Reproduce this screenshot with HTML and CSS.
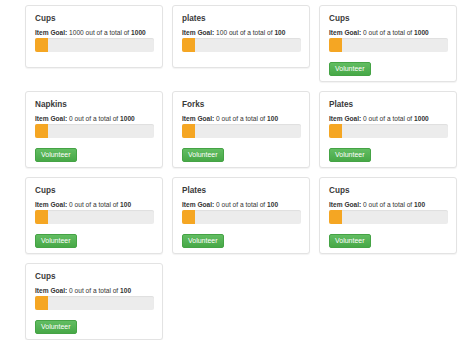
FILE: index.html
```html
<!DOCTYPE html>
<html lang="en">
<head>
    <meta charset="UTF-8">
    <title>Volunteer Items</title>
    <link rel="stylesheet" href="styles.css">
</head>
<body>
    <div class="items">
        <div class="item">
            <h4>Cups</h4>
            <p class="goal"><b>Item Goal:</b> 1000 out of a total of <b>1000</b></p>
            <div class="progress"><div class="progress-bar"></div></div>
        </div>
        <div class="item">
            <h4>plates</h4>
            <p class="goal"><b>Item Goal:</b> 100 out of a total of <b>100</b></p>
            <div class="progress"><div class="progress-bar"></div></div>
        </div>
        <div class="item">
            <h4>Cups</h4>
            <p class="goal"><b>Item Goal:</b> 0 out of a total of <b>1000</b></p>
            <div class="progress"><div class="progress-bar"></div></div>
            <button class="btn-volunteer">Volunteer</button>
        </div>
        <div class="item">
            <h4>Napkins</h4>
            <p class="goal"><b>Item Goal:</b> 0 out of a total of <b>1000</b></p>
            <div class="progress"><div class="progress-bar"></div></div>
            <button class="btn-volunteer">Volunteer</button>
        </div>
        <div class="item">
            <h4>Forks</h4>
            <p class="goal"><b>Item Goal:</b> 0 out of a total of <b>100</b></p>
            <div class="progress"><div class="progress-bar"></div></div>
            <button class="btn-volunteer">Volunteer</button>
        </div>
        <div class="item">
            <h4>Plates</h4>
            <p class="goal"><b>Item Goal:</b> 0 out of a total of <b>1000</b></p>
            <div class="progress"><div class="progress-bar"></div></div>
            <button class="btn-volunteer">Volunteer</button>
        </div>
        <div class="item">
            <h4>Cups</h4>
            <p class="goal"><b>Item Goal:</b> 0 out of a total of <b>100</b></p>
            <div class="progress"><div class="progress-bar"></div></div>
            <button class="btn-volunteer">Volunteer</button>
        </div>
        <div class="item">
            <h4>Plates</h4>
            <p class="goal"><b>Item Goal:</b> 0 out of a total of <b>100</b></p>
            <div class="progress"><div class="progress-bar"></div></div>
            <button class="btn-volunteer">Volunteer</button>
        </div>
        <div class="item">
            <h4>Cups</h4>
            <p class="goal"><b>Item Goal:</b> 0 out of a total of <b>100</b></p>
            <div class="progress"><div class="progress-bar"></div></div>
            <button class="btn-volunteer">Volunteer</button>
        </div>
        <div class="item">
            <h4>Cups</h4>
            <p class="goal"><b>Item Goal:</b> 0 out of a total of <b>100</b></p>
            <div class="progress"><div class="progress-bar"></div></div>
            <button class="btn-volunteer">Volunteer</button>
        </div>
    </div>
</body>
</html>
```
FILE: styles.css
```css
body {
    margin: 0;
    background: #fff;
    font-family: "Liberation Sans", Arial, sans-serif;
    color: #333;
}
.items {
    display: grid;
    grid-template-columns: repeat(3, 138px);
    column-gap: 9px;
    row-gap: 9px;
    align-items: start;
    padding: 5px 0 0 25px;
}
.item {
    box-sizing: border-box;
    border: 1px solid #e3e3e3;
    border-radius: 3px;
    box-shadow: 0 1px 1px rgba(0, 0, 0, 0.05);
    padding: 8px 8px 5px 9px;
    background: #fff;
}
.item h4 {
    margin: 0 0 5px;
    font-size: 8.2px;
    line-height: 10px;
    font-weight: bold;
    color: #3a3a3a;
}
.goal {
    margin: 0 0 1px;
    font-size: 6.6px;
    line-height: 8px;
    color: #333;
}
.progress {
    height: 14px;
    background: #ececec;
    border-radius: 2px;
    box-shadow: inset 0 1px 1px rgba(0, 0, 0, 0.06);
    margin-bottom: 10px;
    overflow: hidden;
}
.progress-bar {
    width: 13px;
    height: 100%;
    background: #f5a623;
}
.btn-volunteer {
    display: block;
    height: 14px;
    padding: 0 5px;
    border: 1px solid #45a345;
    border-radius: 2px;
    background: linear-gradient(#62bd62, #47a847);
    color: #fff;
    font-family: "Liberation Sans", Arial, sans-serif;
    font-size: 7px;
    line-height: 12px;
    cursor: pointer;
}
```
